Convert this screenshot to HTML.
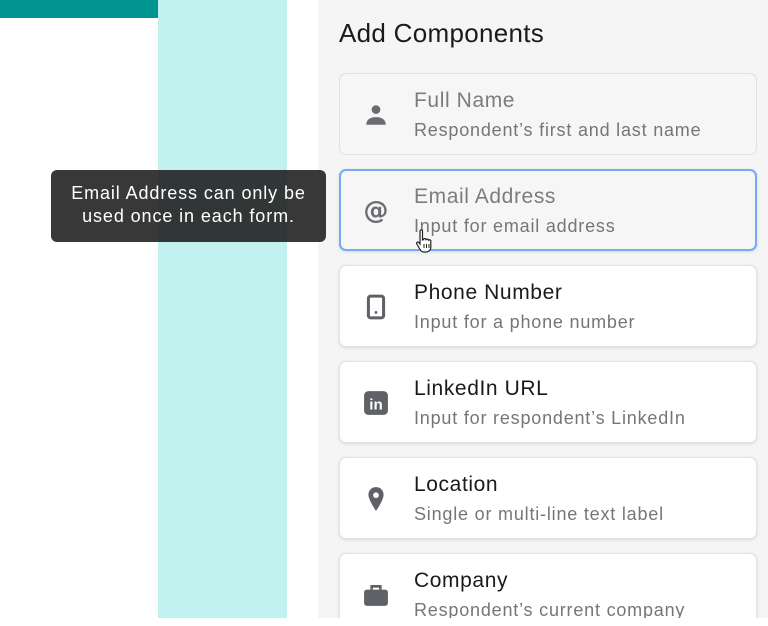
<!DOCTYPE html>
<html><head><style>
*{margin:0;padding:0;box-sizing:border-box}
html,body{width:768px;height:626px;overflow:hidden}
body{background:#fff;font-family:"Liberation Sans",sans-serif;position:relative}
.teal{position:absolute;left:0;top:0;width:158px;height:18px;background:#009490}
.cyan{position:absolute;left:158px;top:0;width:129px;height:618px;background:#c2f2f0}
.panel{position:absolute;left:318px;top:0;width:450px;height:618px;background:#f5f5f5}
h1{position:absolute;left:339px;top:18px;font-size:26px;font-weight:normal;color:#1a1a1a;letter-spacing:0.3px}
.card{position:absolute;left:339px;width:418px;height:82px;background:#fff;border:1px solid #e2e2e2;border-radius:7px;box-shadow:0 1px 3px rgba(0,0,0,.12)}
.card.dis{background:#f6f6f6;box-shadow:none;border-color:#e0e0e0}
.card.sel{border:2px solid #7aa8f6;background:#f6f6f6}
.card .t{position:absolute;left:74px;top:15px;font-size:21px;color:#1a1a1a;letter-spacing:0.6px}
.card .s{position:absolute;left:74px;top:46px;font-size:18px;color:#74767a;letter-spacing:0.8px}
.card.dis .t,.card.sel .t{color:#7a7c80}
.card.sel .t{left:73px;top:14px}.card.sel .s{left:73px;top:45px}
.card svg{position:absolute;left:23px;top:28px}
.card.sel svg{left:22px;top:27px}
.tip{position:absolute;left:51px;top:170px;width:275px;height:72px;background:rgba(28,28,28,.88);border-radius:6px;color:#fff;font-size:18px;letter-spacing:0.9px;text-align:center;line-height:23px;padding-top:12px}
</style></head><body>
<div class="teal"></div><div class="cyan"></div><div class="panel"></div>
<h1>Add Components</h1>
<div class="card dis" style="top:73px"><svg width="26" height="26" viewBox="0 0 24 24"><circle cx="12" cy="7" r="4" fill="#6a6c71"/><path d="M3 21c0-5 4-7 9-7s9 2 9 7z" fill="#6a6c71"/></svg><div class="t">Full Name</div><div class="s">Respondent’s first and last name</div></div>
<div class="card sel" style="top:169px"><svg width="26" height="26" viewBox="0 0 24 24"><text x="12" y="19" text-anchor="middle" font-size="23" font-weight="bold" fill="#6a6c71" font-family="DejaVu Sans">@</text></svg><div class="t">Email Address</div><div class="s">Input for email address</div></div>
<div class="card" style="top:265px"><svg width="26" height="26" viewBox="0 0 24 24"><rect x="5" y="2" width="14" height="20" rx="2" fill="none" stroke="#5f6166" stroke-width="2.8"/><circle cx="12" cy="17" r="1.3" fill="#5f6166"/></svg><div class="t">Phone Number</div><div class="s">Input for a phone number</div></div>
<div class="card" style="top:361px"><svg width="26" height="26" viewBox="0 0 24 24"><rect x="1" y="1" width="22" height="22" rx="4" fill="#5f6166"/><text x="12" y="18" text-anchor="middle" font-size="14" font-weight="bold" fill="#fff" font-family="Liberation Sans">in</text></svg><div class="t">LinkedIn URL</div><div class="s">Input for respondent’s LinkedIn</div></div>
<div class="card" style="top:457px"><svg width="26" height="26" viewBox="0 0 24 24"><path d="M12 1C7.6 1 5 4.3 5 8c0 5 7 15 7 15s7-10 7-15c0-3.7-2.6-7-7-7z" fill="#5f6166"/><circle cx="12" cy="8.5" r="2.6" fill="#fff"/></svg><div class="t">Location</div><div class="s">Single or multi-line text label</div></div>
<div class="card" style="top:553px;height:65px;border-bottom:none;border-radius:7px 7px 0 0"><svg width="26" height="26" viewBox="0 0 24 24"><path d="M8 7V4h8v3" fill="none" stroke="#5f6166" stroke-width="2.4"/><rect x="1" y="7" width="22" height="15" rx="2.5" fill="#5f6166"/></svg><div class="t">Company</div><div class="s">Respondent’s current company</div></div>
<div style="position:absolute;left:0;top:618px;width:768px;height:8px;background:#fff"></div>
<div class="tip">Email Address can only be<br>used once in each form.</div>
<svg style="position:absolute;left:414px;top:228px" width="24" height="28" viewBox="0 0 24 28"><path d="M6 3c0-1.5 2.5-1.5 2.5 0v9l1-.3c0-1.5 2.4-1.5 2.4 0l.1.5c.2-1.4 2.4-1.4 2.4 0v.6c.3-1.3 2.4-1.2 2.4.2v6c0 3-2 5-5 5h-2c-2 0-3-1-4-3l-3-5c-.8-1.4.9-2.6 2-1.5l1.2 1.5z" fill="#fff" stroke="#222" stroke-width="1.2"/><path d="M10 16v4M12.5 16v4M15 16v4" stroke="#222" stroke-width="1"/></svg>
</body></html>
